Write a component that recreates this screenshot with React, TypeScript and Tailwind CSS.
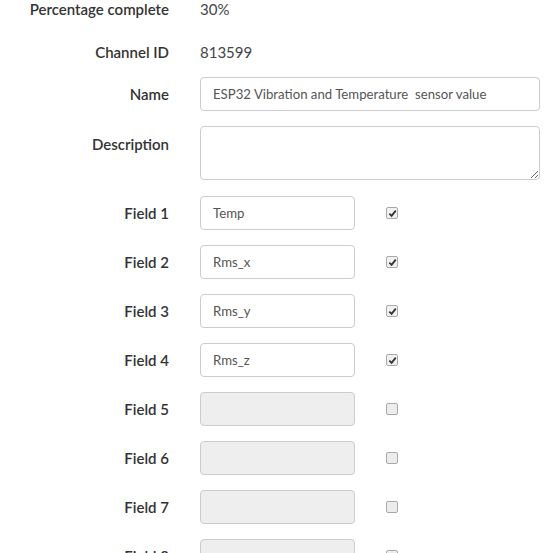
const fields = [
  { n: 1, value: "Temp", on: true },
  { n: 2, value: "Rms_x", on: true },
  { n: 3, value: "Rms_y", on: true },
  { n: 4, value: "Rms_z", on: true },
  { n: 5, value: "", on: false },
  { n: 6, value: "", on: false },
  { n: 7, value: "", on: false },
  { n: 8, value: "", on: false },
];

function Check({ on }: { on: boolean }) {
  return (
    <span
      className={
        "flex h-[12px] w-[12px] items-center justify-center rounded-[2px] border border-[#a9a9a9] " +
        (on ? "bg-[#f1f1f1]" : "bg-[#ececec]")
      }
    >
      {on && (
        <svg viewBox="0 0 10 10" className="h-[9px] w-[9px]">
          <path d="M1.5 5.2 L4 7.6 L8.6 1.8" fill="none" stroke="#333" strokeWidth="2" />
        </svg>
      )}
    </span>
  );
}

function Label({ children }: { children: React.ReactNode }) {
  return (
    <div className="w-[169px] shrink-0 text-right text-[15px] font-semibold text-[#333]">{children}</div>
  );
}

export default function App() {
  return (
    <div className="h-[553px] overflow-hidden bg-white font-['Lato',sans-serif] leading-[20px]">
      <div className="flex h-[18px] items-center">
        <Label>Percentage complete</Label>
        <div className="ml-[31px] text-[15px] text-[#444]">30%</div>
      </div>
      <div className="mt-[25px] flex h-[18px] items-center">
        <Label>Channel ID</Label>
        <div className="ml-[31px] text-[15px] text-[#444]">813599</div>
      </div>
      <div className="mt-[16px] flex h-[34px] items-center">
        <Label>Name</Label>
        <input
          readOnly
          value="ESP32 Vibration and Temperature  sensor value"
          className="ml-[31px] h-[34px] w-[340px] rounded-[4px] border border-[#ccc] px-[12px] text-[13.2px] text-[#555] outline-none"
        />
      </div>
      <div className="mt-[15px] flex items-start">
        <div className="pt-[8px]">
          <Label>Description</Label>
        </div>
        <textarea
          readOnly
          className="ml-[31px] h-[54px] w-[340px] rounded-[4px] border border-[#ccc] px-[12px] text-[14px] outline-none"
        />
      </div>
      <div className="mt-[16px] flex flex-col gap-[15px]">
        {fields.map((f) => (
          <div key={f.n} className="flex h-[34px] items-center">
            <Label>Field {f.n}</Label>
            <input
              readOnly
              value={f.value}
              className={
                "ml-[31px] h-[34px] w-[155px] rounded-[4px] border border-[#ccc] px-[12px] text-[13.2px] text-[#555] outline-none " +
                (f.on ? "bg-white" : "bg-[#eee]")
              }
            />
            <div className="ml-[31px]">
              <Check on={f.on} />
            </div>
          </div>
        ))}
      </div>
    </div>
  );
}
